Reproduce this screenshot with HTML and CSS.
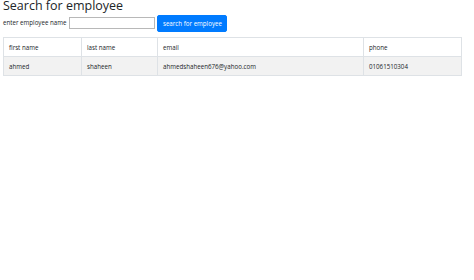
FILE: index.html
```html
<!DOCTYPE html>
<html lang="en">
<head>
    <meta charset="UTF-8">
    <title>Search for employee</title>
    <link rel="stylesheet" href="styles.css">
</head>
<body>
    <h1>Search for employee</h1>
    <div class="search-row">
        <label for="name">enter employee name</label>
        <input type="text" id="name">
        <button type="button" class="btn">search for employee</button>
    </div>

    <table class="emp-table">
        <thead>
            <tr>
                <th class="c1">first name</th>
                <th class="c2">last name</th>
                <th class="c3">email</th>
                <th>phone</th>
            </tr>
        </thead>
        <tbody>
            <tr>
                <td>ahmed</td>
                <td>shaheen</td>
                <td>ahmedshaheen676@yahoo.com</td>
                <td>01061510304</td>
            </tr>
        </tbody>
    </table>
</body>
</html>
```

FILE: styles.css
```css
body {
    font-family: "Open Sans", "Noto Sans", sans-serif;
    font-size: 6.2px;
    color: #212529;
    background: white;
    margin: 0;
    padding: 0 12px 0 3px;
}

h1 {
    font-weight: 400;
    font-size: 12.5px;
    line-height: 14px;
    margin: -1px 0 0 0;
}

.search-row {
    display: flex;
    align-items: center;
    height: 19px;
}

.search-row label {
    margin-right: 3px;
}

.search-row input {
    width: 84px;
    height: 10px;
    border: 1px solid #b8b8b8;
    padding: 0;
    margin: 1px 2px 0 0;
    font-size: 6.2px;
}

.btn {
    background: #007bff;
    color: white;
    border: 1px solid #007bff;
    border-radius: 2px;
    font-family: inherit;
    font-size: 6.2px;
    height: 17px;
    width: 70px;
    padding: 0;
    margin-top: 2px;
}

.emp-table {
    width: 459px;
    margin-top: 5px;
    border-collapse: collapse;
    border: 1px solid #dee2e6;
}

.emp-table th,
.emp-table td {
    text-align: left;
    font-weight: 400;
    color: #212529;
    border: 1px solid #dee2e6;
    padding: 0 5px;
    height: 18px;
}

.emp-table tbody tr {
    background: #f2f2f2;
}

.c1 { width: 67px; }
.c2 { width: 65px; }
.c3 { width: 195px; }
```
